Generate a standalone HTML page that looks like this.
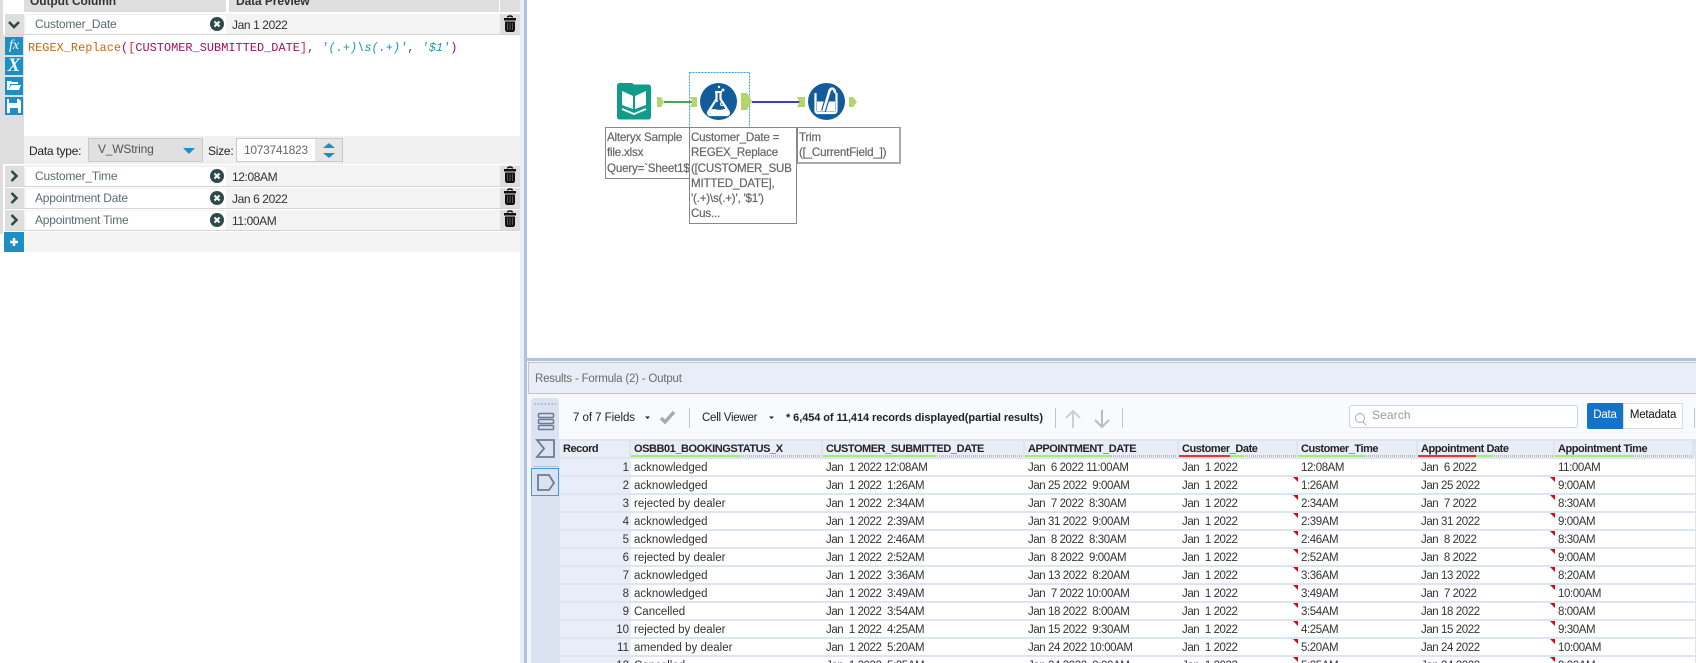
<!DOCTYPE html>
<html><head><meta charset="utf-8"><style>
html,body{margin:0;padding:0;background:#fff}
#p{position:relative;width:1696px;height:663px;overflow:hidden;background:#fff;font-family:"Liberation Sans",sans-serif;font-size:12px;color:#222}
#p div,#p span.a{position:absolute;box-sizing:border-box;white-space:pre}
.g{background:#dedede}.l{background:#f3f3f3}
.inp{background:#fff;left:26px;width:200px;height:19px;color:#5c6a70;padding-left:9px;line-height:18px;letter-spacing:-.2px}
.pv{left:232px;line-height:18px;letter-spacing:-.4px;color:#333}
.ann{background:#fff;border:1px solid #888;color:#666;font-size:11.6px;line-height:15.3px;padding:2px 0 0 1px;overflow:hidden;letter-spacing:-.2px;-webkit-text-stroke:.2px #666}
.r{left:560px;width:1132px;height:16px}
.r span{position:absolute;top:0;height:16px;background:#fff;line-height:18px;padding-left:3px;font-size:11.5px;color:#333;white-space:pre;overflow:hidden}
.d{letter-spacing:-.42px}
.c0{left:0;width:69px;background:#e9edf8!important;text-align:right;padding:0 3px 0 0!important}
.c1{left:71px;width:190px}.c2{left:263px;width:200px}.c3{left:465px;width:152px}.c4{left:619px;width:117px}.c5{left:738px;width:118px}.c6{left:858px;width:135px}.c7{left:995px;width:137px}
.t::after{content:"";position:absolute;right:0;top:0;border-top:6px solid #e8000f;border-left:6px solid transparent}
.h{height:16px;top:441px;background:#e9edf8;font-weight:bold;font-size:11px;line-height:17px;padding-left:3px;letter-spacing:-.45px;color:#222}
.u{height:2px;top:455px}
.dot{height:2px;top:455px;background:repeating-linear-gradient(90deg,#bbb 0 1px,#eee 1px 2px)}
</style></head><body><div id="p">

<!-- left pane -->
<div class="g" style="left:0;top:0;width:3px;height:234px"></div>
<div class="g" style="left:24px;top:0;width:202px;height:12px"></div>
<div class="g" style="left:229px;top:0;width:270px;height:12px"></div>
<div class="g" style="left:500px;top:0;width:20px;height:12px"></div>
<div style="left:30px;top:-6px;font-weight:bold;line-height:14px;color:#333;letter-spacing:-.1px">Output Column</div>
<div style="left:236px;top:-6px;font-weight:bold;line-height:14px;color:#333;letter-spacing:-.1px">Data Preview</div>

<div class="l" style="left:5px;top:14px;width:515px;height:21px;border-bottom:1px solid #d4d4d4"></div>
<div class="g" style="left:5px;top:14px;width:19px;height:20px"></div>
<div class="g" style="left:500px;top:14px;width:20px;height:20px"></div>
<div class="inp" style="top:15px">Customer_Date</div>
<div class="pv" style="top:16px">Jan 1 2022</div>

<div class="g" style="left:3px;top:35px;width:21px;height:129px"></div>
<div style="left:24px;top:36px;width:496px;height:100px;background:#fff"></div>
<div style="left:24px;top:136px;width:496px;height:28px;background:#f0f0f0"></div>
<div style="left:28px;top:40px;font-family:'Liberation Mono',monospace;font-size:11.9px;line-height:16px;letter-spacing:.02px;color:#c06a10">REGEX_Replace<span style="color:#a000a0">(</span><span style="color:#c03030">[</span><span style="color:#a01060">CUSTOMER_SUBMITTED_DATE</span><span style="color:#c03030">]</span><span style="color:#444">, </span><span style="color:#1a9ab0;font-style:italic">'(.+)\s(.+)'</span><span style="color:#444">, </span><span style="color:#1a9ab0;font-style:italic">'$1'</span><span style="color:#a000a0">)</span></div>

<div style="left:5px;top:37px;width:18px;height:18px;background:#1e8fc4;color:#fff;font-family:'Liberation Serif',serif;font-style:italic;font-size:14px;line-height:17px;text-align:center">fx</div>
<div style="left:5px;top:57px;width:18px;height:18px;background:#1e8fc4;color:#fff;font-family:'Liberation Serif',serif;font-style:italic;font-weight:bold;font-size:19px;line-height:18px;text-align:center">X</div>
<div style="left:5px;top:77px;width:18px;height:18px;background:#1e8fc4"></div>
<div style="left:5px;top:97px;width:18px;height:18px;background:#1e8fc4"></div>

<div style="left:29px;top:143px;line-height:16px;color:#222;letter-spacing:-.25px">Data type:</div>
<div style="left:88px;top:138px;width:115px;height:24px;background:#e0e0e0;border:1px solid #c8c8c8;color:#555;line-height:20px;padding-left:9px;letter-spacing:-.2px">V_WString</div>
<div style="left:208px;top:143px;line-height:16px;color:#222;letter-spacing:-.25px">Size:</div>
<div style="left:236px;top:138px;width:107px;height:24px;background:#fff;border:1px solid #c8c8c8;color:#666;line-height:22px;padding-left:7px;letter-spacing:-.3px">1073741823</div>
<div style="left:315px;top:139px;width:27px;height:22px;background:#e6e6e6"></div>

<div class="l" style="left:5px;top:165px;width:515px;height:22px;border-bottom:1px solid #d4d4d4"></div>
<div class="g" style="left:5px;top:166px;width:19px;height:20px"></div>
<div class="g" style="left:500px;top:166px;width:20px;height:20px"></div>
<div class="inp" style="top:167px">Customer_Time</div>
<div class="pv" style="top:168px">12:08AM</div>

<div class="l" style="left:5px;top:188px;width:515px;height:21px;border-bottom:1px solid #d4d4d4"></div>
<div class="g" style="left:5px;top:188px;width:19px;height:20px"></div>
<div class="g" style="left:500px;top:188px;width:20px;height:20px"></div>
<div class="inp" style="top:189px">Appointment Date</div>
<div class="pv" style="top:190px">Jan 6 2022</div>

<div class="l" style="left:5px;top:210px;width:515px;height:21px;border-bottom:1px solid #d4d4d4"></div>
<div class="g" style="left:5px;top:210px;width:19px;height:20px"></div>
<div class="g" style="left:500px;top:210px;width:20px;height:20px"></div>
<div class="inp" style="top:211px">Appointment Time</div>
<div class="pv" style="top:212px">11:00AM</div>

<div class="l" style="left:24px;top:232px;width:496px;height:20px"></div>
<div style="left:4px;top:232px;width:20px;height:20px;background:#1e8fc4"></div>

<svg style="position:absolute;left:0;top:0" width="525" height="260" fill="none">
<defs>
<g id="x"><circle r="7" fill="#2f4a4a"/><path d="M-2.500-2.500L2.500 2.500M2.500-2.500L-2.500 2.500" stroke="#fff" stroke-width="2"/></g>
<g id="tr"><path d="M-2.500-6.500C-2-8.500 2-8.500 2.500-6.500" stroke="#111" stroke-width="1.500"/><path d="M-6-6h12v2.500h-12z" fill="#111"/><path d="M-5-2.500h10v8c0 1.500-1 2.500-2.500 2.500h-5c-1.500 0-2.500-1-2.500-2.500z" fill="#111"/><path d="M-2.500-1v7M0-1v7M2.500-1v7" stroke="#777" stroke-width=".7"/></g>
<path id="c" d="M-2.500-5L2.500 0L-2.500 5" stroke="#2f4a4a" stroke-width="2.600"/>
</defs>
<path d="M9 22l5 5 5-5" stroke="#2f4a4a" stroke-width="2.600"/>
<use href="#c" x="14" y="176"/><use href="#c" x="14" y="198"/><use href="#c" x="14" y="220"/>
<use href="#x" x="217" y="24"/><use href="#x" x="217" y="176"/><use href="#x" x="217" y="198"/><use href="#x" x="217" y="220"/>
<use href="#tr" x="510" y="24"/><use href="#tr" x="510" y="175"/><use href="#tr" x="510" y="197"/><use href="#tr" x="510" y="219"/>
<path d="M7 90V81h4l1 1h6v2H10l-1 6zM9 90l2-5h10l-2 5z" fill="#fff"/>
<path d="M7 99h12l2 2v12H7z" fill="#fff"/><path d="M9 99h8v4H9zM10 108h8v5h-8z" fill="#1e8fc4"/>
<path d="M14 238v8M10 242h8" stroke="#fff" stroke-width="2.500"/>
<path d="M183 148h12l-6 6z" fill="#1e8fc4"/>
<path d="M323 148l6-5 6 5z" fill="#1e8fc4"/><path d="M323 153h12l-6 5z" fill="#1e8fc4"/>
</svg>

<!-- splitters -->
<div style="left:520px;top:0;width:4px;height:663px;background:#e9edf8"></div>
<div style="left:524px;top:0;width:3px;height:663px;background:#b0c2e0"></div>
<div style="left:527px;top:358px;width:1169px;height:3px;background:#b0c2e0"></div>
<div style="left:527px;top:361px;width:1169px;height:302px;background:#f4f6fc"></div>

<!-- canvas -->
<div class="ann" style="left:605px;top:127px;width:90px;height:52px">Alteryx Sample
file.xlsx
Query=`Sheet1$`</div>
<div class="ann" style="left:689px;top:127px;width:108px;height:97px">Customer_Date =
REGEX_Replace
([CUSTOMER_SUB
MITTED_DATE],
'(.+)\s(.+)', '$1')
Cus...</div>
<div class="ann" style="left:797px;top:127px;width:104px;height:37px;border-right:2px solid #aaa;border-bottom:2px solid #aaa">Trim
([_CurrentField_])</div>

<svg style="position:absolute;left:600px;top:65px" width="270" height="65" fill="none">
<path d="M89.500 7.500H149.500V62" stroke="#3b9bef" stroke-dasharray="2 1"/>
<path d="M89.500 7.500V62" stroke="#3b9bef" stroke-dasharray="2 1"/>
<path d="M64 37H92" stroke="#3fa85c" stroke-width="2"/>
<path d="M152 37H200" stroke="#3a3adf" stroke-width="2"/>
<path d="M57 32h4l3 5-3 5h-4z" fill="#b5d56a"/>
<path d="M90 32h7v10h-7l2.500-5z" fill="#b5d56a"/>
<path d="M141 28h6l5 8.500-5 8.500h-6z" fill="#b5d56a"/>
<path d="M197 32h8v10h-8l2.500-5z" fill="#b5d56a"/>
<path d="M249 32h4l4 5-4 5h-4z" fill="#b5d56a"/>
<!-- input -->
<path d="M17 21c0-2 1-3 3-3h12l2 1.500h14c2 0 3 1 3 3v29c0 2-1 3-3 3H20c-2 0-3-1-3-3z" fill="#0f9d8a"/>
<path d="M22 26l11 5v13l-11-4zM46 26l-11 5v13l11-4z" fill="#fff"/>
<path d="M22 44l12 5 12-5" stroke="#fff" stroke-width="1.800"/>
<!-- formula -->
<circle cx="118.500" cy="36.500" r="18.500" fill="#135c9b"/>
<path d="M115 27h7" stroke="#fff" stroke-width="2"/>
<path d="M116.500 27v7l-8 12.500c-1 2 0 3.500 2 3.500h16c2 0 3-1.500 2-3.500l-8-12.500v-7" stroke="#fff" stroke-width="2.200"/>
<path d="M109.500 45c4-2.500 9 1 13-.5 2-.7 4-1 5 0l1.500 3c0 1-1 2-2 2h-16c-2 0-2-2-1.500-4.500z" fill="#fff"/>
<circle cx="122" cy="39" r="1.500" stroke="#fff"/><circle cx="117" cy="36" r="1" fill="#fff"/>
<circle cx="123" cy="25" r="1.500" fill="#fff"/><circle cx="119" cy="22" r="1.200" fill="#fff"/>
<!-- trim -->
<circle cx="226.500" cy="36.500" r="18.500" fill="#135c9b"/>
<path d="M215.500 28v18c0 1 1 2 2 2h17c1 0 2-1 2-2V28" stroke="#fff" stroke-width="2.200"/>
<path d="M217 36.500h18v10h-18z" fill="#fff"/>
<path d="M223.500 46l6-20c.8-2.500 3-3 4.500-1.500l1.500 3.500" stroke="#135c9b" stroke-width="5"/>
<path d="M223.500 46l6-20c.8-2.500 3-3 4.500-1.500l1.500 3.500" stroke="#fff" stroke-width="2.600"/>
</svg>

<!-- results -->
<div style="left:528px;top:362px;width:1168px;height:32px;background:#e9edf8;border:1px solid #c4c4c4;border-right:0;color:#6b6b6b;line-height:33px;padding-left:6px;font-size:11.5px;letter-spacing:-.2px">Results - Formula (2) - Output</div>
<div style="left:531px;top:398px;width:28px;height:265px;background:#dbe2f0;border-radius:4px 4px 0 0"></div>
<div style="left:559px;top:398px;width:1137px;height:41px;background:#f8fafe"></div>
<div style="left:559px;top:439px;width:1137px;height:224px;background:#dde4f2"></div>

<div style="left:573px;top:410px;line-height:16px;font-size:11.5px;letter-spacing:-.05px">7 of 7 Fields</div>
<div style="left:702px;top:410px;line-height:16px;font-size:11.5px;letter-spacing:-.25px">Cell Viewer</div>
<div style="left:786px;top:410px;line-height:16px;font-size:11px;font-weight:bold;letter-spacing:-.08px">* 6,454 of 11,414 records displayed(partial results)</div>
<div style="left:1349px;top:405px;width:229px;height:23px;background:#fff;border:1px solid #c9d3e6;border-radius:3px;color:#999;line-height:19px;padding-left:22px;letter-spacing:.1px">Search</div>
<div style="left:1587px;top:403px;width:36px;height:26px;background:#1273c9;color:#fff;line-height:25px;text-align:center;font-size:11.5px;letter-spacing:-.2px;border-radius:2px 0 0 2px">Data</div>
<div style="left:1623px;top:403px;width:60px;height:26px;background:#fff;border:1px solid #d5dcea;color:#111;line-height:23px;text-align:center;font-size:11.5px;letter-spacing:-.2px">Metadata</div>

<svg style="position:absolute;left:527px;top:398px" width="1169" height="100" fill="none">
<path d="M7 6h22" stroke="#99a" stroke-dasharray="2 1.500" stroke-width="1"/>
<g stroke="#6b7d96" stroke-width="1.500"><rect x="11.500" y="15.500" width="15" height="4" rx="1"/><rect x="11.500" y="21.500" width="15" height="4" rx="1"/><rect x="11.500" y="27.500" width="15" height="4" rx="1"/></g>
<path d="M10 42H27V59H10L17 50.500z" stroke="#6b7d96" stroke-width="1.800"/>
<path d="M7 68.500H31" stroke="#b8bfcc"/>
<rect x="4.500" y="70.500" width="27" height="27" stroke="#3b9bef" fill="#dbe2f0"/>
<path d="M11 77H22L27 85 22 92H11z" stroke="#6b7d96" stroke-width="1.800"/>
<path d="M134 20l4 4 9-10" stroke="#aaa" stroke-width="3.500"/>
<path d="M162.500 10V30M528.500 10V30M595.500 10V30M1167.500 10V30" stroke="#c4c4c4"/>
<path d="M546 30V13M539 20l7-7 7 7" stroke="#cfcfcf" stroke-width="2"/>
<path d="M575 12V29M568 22l7 7 7-7" stroke="#bbb" stroke-width="2"/>
<path d="M118 18.500h5l-2.500 2.500zM242 18.500h5l-2.500 2.500z" fill="#222"/>
<circle cx="833" cy="20" r="4.500" stroke="#aab"/><path d="M836 24l3 3" stroke="#aab"/>
</svg>

<!-- header -->
<div class="h" style="left:560px;width:69px">Record</div>
<div class="h" style="left:631px;width:190px">OSBB01_BOOKINGSTATUS_X</div>
<div class="h" style="left:823px;width:200px">CUSTOMER_SUBMITTED_DATE</div>
<div class="h" style="left:1025px;width:152px">APPOINTMENT_DATE</div>
<div class="h" style="left:1179px;width:117px">Customer_Date</div>
<div class="h" style="left:1298px;width:118px">Customer_Time</div>
<div class="h" style="left:1418px;width:135px">Appointment Date</div>
<div class="h" style="left:1555px;width:137px">Appointment Time</div>

<div class="dot" style="left:631px;width:190px"></div><div class="u" style="left:631px;width:108px;background:#a0f070"></div>
<div class="dot" style="left:823px;width:200px"></div><div class="u" style="left:823px;width:113px;background:#a0f070"></div>
<div class="dot" style="left:1025px;width:152px"></div><div class="u" style="left:1025px;width:86px;background:#a0f070"></div>
<div class="dot" style="left:1179px;width:117px"></div><div class="u" style="left:1179px;width:65px;background:#a0f070"></div><div class="u" style="left:1179px;width:51px;background:#f03030"></div>
<div class="dot" style="left:1298px;width:118px"></div><div class="u" style="left:1298px;width:66px;background:#a0f070"></div>
<div class="dot" style="left:1418px;width:135px"></div><div class="u" style="left:1418px;width:75px;background:#a0f070"></div><div class="u" style="left:1418px;width:58px;background:#f03030"></div>
<div class="dot" style="left:1555px;width:137px"></div><div class="u" style="left:1555px;width:78px;background:#a0f070"></div>

<!-- rows -->
<div class="r" style="top:459px"><span class="c0">1</span><span class="c1">acknowledged</span><span class="c2 d">Jan  1 2022 12:08AM</span><span class="c3 d">Jan  6 2022 11:00AM</span><span class="c4 d">Jan  1 2022</span><span class="c5 d">12:08AM</span><span class="c6 d">Jan  6 2022</span><span class="c7 d">11:00AM</span></div>
<div class="r" style="top:477px"><span class="c0">2</span><span class="c1">acknowledged</span><span class="c2 d">Jan  1 2022  1:26AM</span><span class="c3 d">Jan 25 2022  9:00AM</span><span class="c4 d t">Jan  1 2022</span><span class="c5 d">1:26AM</span><span class="c6 d t">Jan 25 2022</span><span class="c7 d">9:00AM</span></div>
<div class="r" style="top:495px"><span class="c0">3</span><span class="c1">rejected by dealer</span><span class="c2 d">Jan  1 2022  2:34AM</span><span class="c3 d">Jan  7 2022  8:30AM</span><span class="c4 d t">Jan  1 2022</span><span class="c5 d">2:34AM</span><span class="c6 d t">Jan  7 2022</span><span class="c7 d">8:30AM</span></div>
<div class="r" style="top:513px"><span class="c0">4</span><span class="c1">acknowledged</span><span class="c2 d">Jan  1 2022  2:39AM</span><span class="c3 d">Jan 31 2022  9:00AM</span><span class="c4 d t">Jan  1 2022</span><span class="c5 d">2:39AM</span><span class="c6 d t">Jan 31 2022</span><span class="c7 d">9:00AM</span></div>
<div class="r" style="top:531px"><span class="c0">5</span><span class="c1">acknowledged</span><span class="c2 d">Jan  1 2022  2:46AM</span><span class="c3 d">Jan  8 2022  8:30AM</span><span class="c4 d t">Jan  1 2022</span><span class="c5 d">2:46AM</span><span class="c6 d t">Jan  8 2022</span><span class="c7 d">8:30AM</span></div>
<div class="r" style="top:549px"><span class="c0">6</span><span class="c1">rejected by dealer</span><span class="c2 d">Jan  1 2022  2:52AM</span><span class="c3 d">Jan  8 2022  9:00AM</span><span class="c4 d t">Jan  1 2022</span><span class="c5 d">2:52AM</span><span class="c6 d t">Jan  8 2022</span><span class="c7 d">9:00AM</span></div>
<div class="r" style="top:567px"><span class="c0">7</span><span class="c1">acknowledged</span><span class="c2 d">Jan  1 2022  3:36AM</span><span class="c3 d">Jan 13 2022  8:20AM</span><span class="c4 d t">Jan  1 2022</span><span class="c5 d">3:36AM</span><span class="c6 d t">Jan 13 2022</span><span class="c7 d">8:20AM</span></div>
<div class="r" style="top:585px"><span class="c0">8</span><span class="c1">acknowledged</span><span class="c2 d">Jan  1 2022  3:49AM</span><span class="c3 d">Jan  7 2022 10:00AM</span><span class="c4 d t">Jan  1 2022</span><span class="c5 d">3:49AM</span><span class="c6 d t">Jan  7 2022</span><span class="c7 d">10:00AM</span></div>
<div class="r" style="top:603px"><span class="c0">9</span><span class="c1">Cancelled</span><span class="c2 d">Jan  1 2022  3:54AM</span><span class="c3 d">Jan 18 2022  8:00AM</span><span class="c4 d t">Jan  1 2022</span><span class="c5 d">3:54AM</span><span class="c6 d t">Jan 18 2022</span><span class="c7 d">8:00AM</span></div>
<div class="r" style="top:621px"><span class="c0">10</span><span class="c1">rejected by dealer</span><span class="c2 d">Jan  1 2022  4:25AM</span><span class="c3 d">Jan 15 2022  9:30AM</span><span class="c4 d t">Jan  1 2022</span><span class="c5 d">4:25AM</span><span class="c6 d t">Jan 15 2022</span><span class="c7 d">9:30AM</span></div>
<div class="r" style="top:639px"><span class="c0">11</span><span class="c1">amended by dealer</span><span class="c2 d">Jan  1 2022  5:20AM</span><span class="c3 d">Jan 24 2022 10:00AM</span><span class="c4 d t">Jan  1 2022</span><span class="c5 d">5:20AM</span><span class="c6 d t">Jan 24 2022</span><span class="c7 d">10:00AM</span></div>
<div class="r" style="top:657px"><span class="c0">12</span><span class="c1">Cancelled</span><span class="c2 d">Jan  1 2022  5:25AM</span><span class="c3 d">Jan 24 2022  9:00AM</span><span class="c4 d t">Jan  1 2022</span><span class="c5 d">5:25AM</span><span class="c6 d t">Jan 24 2022</span><span class="c7 d">9:00AM</span></div>

</div></body></html>
